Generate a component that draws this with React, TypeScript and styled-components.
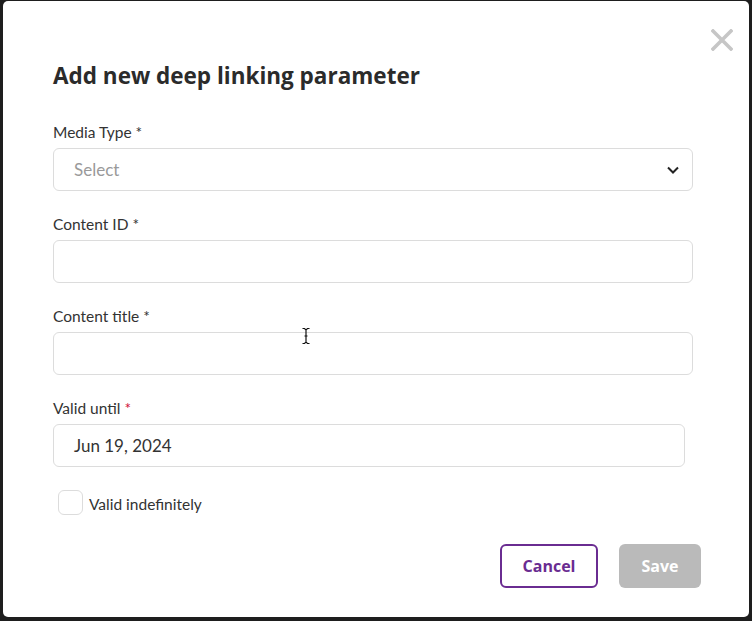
import React from "react";
import styled, { createGlobalStyle } from "styled-components";

const Global = createGlobalStyle`
  html, body { margin: 0; padding: 0; background: #1e1e1e; }
  body { font-family: "Lato", "Noto Sans", sans-serif; }
  * { box-sizing: border-box; }
`;

const Stage = styled.div`
  width: 752px;
  height: 621px;
  padding: 1px 3px 4px 3px;
  background: #1e1e1e;
`;

const Modal = styled.div`
  position: relative;
  height: 100%;
  background: #fff;
  border-radius: 5px;
  padding: 61px 56px 0 50px;
  display: flex;
  flex-direction: column;
`;

const CloseButton = styled.button`
  position: absolute;
  top: 27px;
  right: 15px;
  width: 24px;
  height: 24px;
  padding: 0;
  border: 0;
  background: transparent;
  display: flex;
  align-items: center;
  justify-content: center;
`;

const Title = styled.h2`
  margin: 0 0 32px;
  font-family: "Open Sans", "Lato", sans-serif;
  font-size: 22.5px;
  line-height: 28px;
  font-weight: 700;
  color: #2b2b2b;
`;

const Field = styled.div`
  display: flex;
  flex-direction: column;
  gap: 6px;
  margin-bottom: 23px;
`;

const Label = styled.label`
  font-size: 15.5px;
  line-height: 20px;
  color: #333;
`;

const Required = styled.span<{ $red?: boolean }>`
  color: ${(p) => (p.$red ? "#d0103a" : "#333")};
`;

const Box = styled.div<{ $width?: number }>`
  width: ${(p) => (p.$width ? `${p.$width}px` : "100%")};
  height: 43px;
  border: 1px solid #dcdcdc;
  border-radius: 6px;
  background: #fff;
  display: flex;
  align-items: center;
  justify-content: space-between;
  padding: 0 12px 0 20px;
  font-size: 17px;
`;

const Placeholder = styled.span`
  color: #9a9a9a;
`;

const Value = styled.span`
  color: #333;
`;

const CheckRow = styled.div`
  display: flex;
  align-items: center;
  gap: 6px;
  margin: 0 0 29px 5px;
`;

const CheckBox = styled.span`
  width: 25px;
  height: 25px;
  border: 1px solid #dcdcdc;
  border-radius: 6px;
  background: #fff;
`;

const CheckLabel = styled.span`
  font-size: 15.5px;
  color: #333;
  margin-top: 2px;
`;

const Actions = styled.div`
  display: flex;
  justify-content: flex-end;
  gap: 21px;
  margin-right: -8px;
`;

const Button = styled.button<{ $variant: "outline" | "disabled" }>`
  height: 44px;
  border-radius: 6px;
  font-family: "Open Sans", "Lato", sans-serif;
  font-size: 16px;
  font-weight: 700;
  padding: 0;
  ${(p) =>
    p.$variant === "outline"
      ? `width: 98px; border: 2px solid #6a2c91; color: #6a2c91; background: #fff;`
      : `width: 82px; border: 0; color: #fff; background: #bababa;`}
`;

const Cursor = styled.svg`
  position: absolute;
  left: 298px;
  top: 326px;
`;

export default function App() {
  return (
    <>
      <Global />
      <Stage>
        <Modal>
          <CloseButton aria-label="Close">
            <svg width="22" height="22" viewBox="0 0 22 22">
              <path d="M2 2 L20 20 M20 2 L2 20" stroke="#c6c6c6" strokeWidth="3.6" strokeLinecap="square" />
            </svg>
          </CloseButton>
          <Title>Add new deep linking parameter</Title>

          <Field>
            <Label>
              Media Type <Required>*</Required>
            </Label>
            <Box>
              <Placeholder>Select</Placeholder>
              <svg width="14" height="10" viewBox="0 0 14 10">
                <path d="M2 2.5 L7 7.5 L12 2.5" fill="none" stroke="#222" strokeWidth="2" />
              </svg>
            </Box>
          </Field>

          <Field>
            <Label>
              Content ID <Required>*</Required>
            </Label>
            <Box />
          </Field>

          <Field>
            <Label>
              Content title <Required>*</Required>
            </Label>
            <Box />
          </Field>

          <Field>
            <Label>
              Valid until <Required $red>*</Required>
            </Label>
            <Box $width={632}>
              <Value>Jun 19, 2024</Value>
            </Box>
          </Field>

          <CheckRow>
            <CheckBox />
            <CheckLabel>Valid indefinitely</CheckLabel>
          </CheckRow>

          <Actions>
            <Button $variant="outline">Cancel</Button>
            <Button $variant="disabled">Save</Button>
          </Actions>

          <Cursor width="10" height="18" viewBox="0 0 10 18">
            <path d="M1.5 1.5 H3.5 L5 3 L6.5 1.5 H8.5 M5 3 V15 M1.5 16.5 H3.5 L5 15 L6.5 16.5 H8.5 M3.5 9 H6.5" fill="none" stroke="#111" strokeWidth="1.2" />
          </Cursor>
        </Modal>
      </Stage>
    </>
  );
}
